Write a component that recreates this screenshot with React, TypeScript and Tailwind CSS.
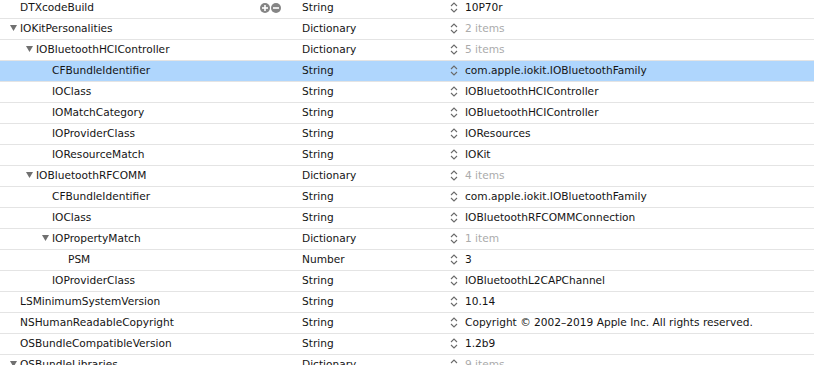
import React from "react";

type Row = {
  key: string;
  level: number;
  open?: boolean;
  type: string;
  value: string;
  muted?: boolean;
  selected?: boolean;
  buttons?: boolean;
};

const rows: Row[] = [
  { key: "DTXcodeBuild", level: 0, type: "String", value: "10P70r", buttons: true },
  { key: "IOKitPersonalities", level: 0, open: true, type: "Dictionary", value: "2 items", muted: true },
  { key: "IOBluetoothHCIController", level: 1, open: true, type: "Dictionary", value: "5 items", muted: true },
  { key: "CFBundleIdentifier", level: 2, type: "String", value: "com.apple.iokit.IOBluetoothFamily", selected: true },
  { key: "IOClass", level: 2, type: "String", value: "IOBluetoothHCIController" },
  { key: "IOMatchCategory", level: 2, type: "String", value: "IOBluetoothHCIController" },
  { key: "IOProviderClass", level: 2, type: "String", value: "IOResources" },
  { key: "IOResourceMatch", level: 2, type: "String", value: "IOKit" },
  { key: "IOBluetoothRFCOMM", level: 1, open: true, type: "Dictionary", value: "4 items", muted: true },
  { key: "CFBundleIdentifier", level: 2, type: "String", value: "com.apple.iokit.IOBluetoothFamily" },
  { key: "IOClass", level: 2, type: "String", value: "IOBluetoothRFCOMMConnection" },
  { key: "IOPropertyMatch", level: 2, open: true, type: "Dictionary", value: "1 item", muted: true },
  { key: "PSM", level: 3, type: "Number", value: "3" },
  { key: "IOProviderClass", level: 2, type: "String", value: "IOBluetoothL2CAPChannel" },
  { key: "LSMinimumSystemVersion", level: 0, type: "String", value: "10.14" },
  { key: "NSHumanReadableCopyright", level: 0, type: "String", value: "Copyright © 2002–2019 Apple Inc. All rights reserved." },
  { key: "OSBundleCompatibleVersion", level: 0, type: "String", value: "1.2b9" },
  { key: "OSBundleLibraries", level: 0, open: true, type: "Dictionary", value: "9 items", muted: true },
];

// padding so the disclosure slot (10px) sits just before the text
const indent = ["pl-[10px]", "pl-[26px]", "pl-[42px]", "pl-[58px]"];

function Triangle() {
  return (
    <svg width="7" height="6" viewBox="0 0 7 6" className="mt-[-1px]">
      <polygon points="0,0 7,0 3.5,6" fill="#707070" />
    </svg>
  );
}

function Stepper() {
  return (
    <svg width="8" height="11" viewBox="0 0 8 11">
      <path d="M1 4 L4 1 L7 4" fill="none" stroke="#6a6a6a" strokeWidth="1.1" />
      <path d="M1 7 L4 10 L7 7" fill="none" stroke="#6a6a6a" strokeWidth="1.1" />
    </svg>
  );
}

function RoundButton({ plus }: { plus?: boolean }) {
  return (
    <svg width="10" height="10" viewBox="0 0 10 10">
      <circle cx="5" cy="5" r="5" fill="#858585" />
      <rect x="2" y="4.2" width="6" height="1.6" fill="#fff" />
      {plus && <rect x="4.2" y="2" width="1.6" height="6" fill="#fff" />}
    </svg>
  );
}

export default function App() {
  return (
    <div
      className="w-[814px] h-[365px] overflow-hidden bg-white text-[10.6px] text-[#141414]"
      style={{ fontFamily: '"DejaVu Sans", "Liberation Sans", sans-serif' }}
    >
      <div className="-mt-[2px]">
        {rows.map((r, i) => (
          <div
            key={i}
            className={`flex items-center h-[21px] border-b border-[#e4e4e4] ${r.selected ? "bg-[#afd6fd]" : ""}`}
          >
            <div className={`w-[302px] flex items-center ${indent[r.level]}`}>
              <span className="w-[10px] flex items-center">{r.open && <Triangle />}</span>
              <span className="flex-1 whitespace-nowrap">{r.key}</span>
              {r.buttons && (
                <span className="flex items-center gap-[1px] pr-[21px]">
                  <RoundButton plus />
                  <RoundButton />
                </span>
              )}
            </div>
            <div className="w-[148px] whitespace-nowrap">{r.type}</div>
            <div className="flex items-center gap-[7px] whitespace-nowrap">
              <Stepper />
              <span className={r.muted ? "text-[#ababab]" : ""}>{r.value}</span>
            </div>
          </div>
        ))}
      </div>
    </div>
  );
}
